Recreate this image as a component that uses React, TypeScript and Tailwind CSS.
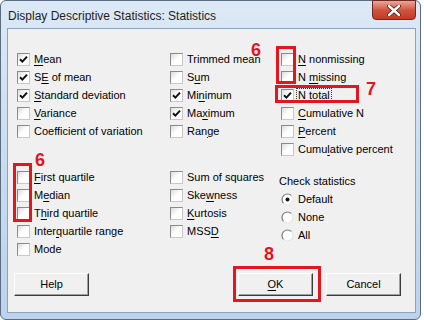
import React from 'react';

type Item = { label: string; key?: number; checked?: boolean; focus?: boolean };

function Label({ label, keyIdx }: { label: string; keyIdx?: number }) {
  if (keyIdx === undefined) return <span>{label}</span>;
  return (
    <span>
      {label.slice(0, keyIdx)}
      <span className="underline underline-offset-[2px]">{label[keyIdx]}</span>
      {label.slice(keyIdx + 1)}
    </span>
  );
}

function Box({ checked }: { checked?: boolean }) {
  return (
    <span className="flex h-[13px] w-[13px] shrink-0 items-center justify-center border border-t-[#8a8a8a] border-l-[#8a8a8a] border-r-[#c8c8c8] border-b-[#c8c8c8] bg-gradient-to-br from-[#dcdcdc] via-white to-white">
      {checked && (
        <svg width="9" height="9" viewBox="0 0 9 9">
          <path d="M1 4.2 L3.4 6.6 L8 1.6" fill="none" stroke="#111" strokeWidth="2" />
        </svg>
      )}
    </span>
  );
}

function Check({ item }: { item: Item }) {
  return (
    <div className="flex h-[18px] items-center gap-[4px]">
      <Box checked={item.checked} />
      <span className={item.focus ? 'outline outline-1 outline-dotted outline-[#333] px-[1px] -ml-[1px] leading-[13px]' : ''}>
        <Label label={item.label} keyIdx={item.key} />
      </span>
    </div>
  );
}

function Radio({ label, on }: { label: string; on?: boolean }) {
  return (
    <div className="flex h-[18px] items-center gap-[4px]">
      <svg width="13" height="13" viewBox="0 0 13 13" className="shrink-0">
        <circle cx="6.5" cy="6.5" r="5.5" fill="#fff" />
        <path d="M2.6 10.4 A5.5 5.5 0 0 1 10.4 2.6" fill="none" stroke="#7a7a7a" strokeWidth="1.2" />
        <path d="M10.4 2.6 A5.5 5.5 0 0 1 2.6 10.4" fill="none" stroke="#e6e6e6" strokeWidth="1.2" />
        {on && <circle cx="6.5" cy="6.5" r="2" fill="#111" />}
      </svg>
      <span>{label}</span>
    </div>
  );
}

function Btn({ children }: { children: React.ReactNode }) {
  return (
    <div className="flex h-[23px] w-[75px] items-center justify-center border border-t-white border-l-white border-r-[#3c3c3c] border-b-[#3c3c3c] bg-[#f0f0f0] shadow-[inset_-1px_-1px_0_#a0a0a0]">
      {children}
    </div>
  );
}

const topCols: Item[][] = [
  [
    { label: 'Mean', key: 0, checked: true },
    { label: 'SE of mean', key: 1, checked: true },
    { label: 'Standard deviation', key: 0, checked: true },
    { label: 'Variance', key: 0 },
    { label: 'Coefficient of variation' },
  ],
  [
    { label: 'Trimmed mean' },
    { label: 'Sum', key: 1 },
    { label: 'Minimum', key: 2, checked: true },
    { label: 'Maximum', key: 2, checked: true },
    { label: 'Range', key: 3 },
  ],
  [
    { label: 'N nonmissing', key: 0 },
    { label: 'N missing', key: 2 },
    { label: 'N total', key: 2, checked: true, focus: true },
    { label: 'Cumulative N', key: 0 },
    { label: 'Percent', key: 0 },
    { label: 'Cumulative percent', key: 4 },
  ],
];

const bottomCols: Item[][] = [
  [
    { label: 'First quartile', key: 0 },
    { label: 'Median', key: 1 },
    { label: 'Third quartile', key: 1 },
    { label: 'Interquartile range', key: 5 },
    { label: 'Mode' },
  ],
  [
    { label: 'Sum of squares' },
    { label: 'Skewness', key: 3 },
    { label: 'Kurtosis', key: 0 },
    { label: 'MSSD', key: 3 },
  ],
];

export default function App() {
  return (
    <div className="relative h-[320px] w-[424px] overflow-hidden bg-white text-[11px] text-black" style={{ fontFamily: '"Liberation Sans", Arial, sans-serif' }}>
      <div className="h-[320px] w-[421px] rounded-[6px] border border-[#5b6b80] bg-gradient-to-b from-[#dce9f6] via-[#c9dcf0] to-[#bcd3ec]">
        {/* title bar */}
        <div className="flex h-[27px] items-start justify-between">
          <span className="pl-[7px] pt-[6px] text-[12px] text-[#1e1e1e]">Display Descriptive Statistics: Statistics</span>
          <div className="mr-[4px] -mt-[1px] flex h-[20px] w-[44px] items-center justify-center rounded-b-[4px] border border-[#6e2a22] bg-gradient-to-b from-[#e9a898] via-[#d0543f] to-[#c33a22]">
            <svg width="14" height="11" viewBox="0 0 14 11">
              <path d="M2 1 L12 10 M12 1 L2 10" stroke="#4a1a14" strokeWidth="4" strokeLinecap="round" />
              <path d="M2 1 L12 10 M12 1 L2 10" stroke="#fff" strokeWidth="2.4" strokeLinecap="round" />
            </svg>
          </div>
        </div>

        {/* client panel */}
        <div className="ml-[6px] h-[285px] w-[409px] border border-[#8ea2b9] bg-[#f0f0f0] pl-[9px] pt-[21px]">
          <div className="grid grid-cols-[153px_111px_1fr]">
            {topCols.map((col, i) => (
              <div key={i} className="flex flex-col">
                {col.map((it) => (
                  <Check key={it.label} item={it} />
                ))}
              </div>
            ))}
          </div>

          <div className="mt-[10px] grid grid-cols-[153px_109px_1fr]">
            {bottomCols.map((col, i) => (
              <div key={i} className="flex flex-col">
                {col.map((it) => (
                  <Check key={it.label} item={it} />
                ))}
              </div>
            ))}
            <div className="flex flex-col pt-[4px]">
              <div className="flex h-[18px] items-center">Check statistics</div>
              <div className="flex flex-col pl-[2px]">
                <Radio label="Default" on />
                <Radio label="None" />
                <Radio label="All" />
              </div>
            </div>
          </div>

          <div className="mt-[15px] flex items-center pr-[14px]">
            <div className="-ml-[3px]">
              <Btn>Help</Btn>
            </div>
            <div className="ml-auto flex gap-[13px]">
              <Btn>
                <Label label="OK" keyIdx={0} />
              </Btn>
              <Btn>Cancel</Btn>
            </div>
          </div>
        </div>
      </div>

      {/* red annotations */}
      <span className="absolute left-[251px] top-[40px] text-[18px] font-bold leading-[20px] text-[#e3151d]">6</span>
      <div className="absolute left-[276px] top-[46px] h-[38px] w-[20px] border-[3px] border-[#e3151d]" />
      <span className="absolute left-[366px] top-[79px] text-[18px] font-bold leading-[20px] text-[#e3151d]">7</span>
      <div className="absolute left-[275px] top-[85px] h-[18px] w-[84px] border-[3px] border-[#e3151d]" />
      <span className="absolute left-[35px] top-[150px] text-[18px] font-bold leading-[20px] text-[#e3151d]">6</span>
      <div className="absolute left-[13px] top-[163px] h-[59px] w-[19px] border-[3px] border-[#e3151d]" />
      <span className="absolute left-[264px] top-[244px] text-[18px] font-bold leading-[20px] text-[#e3151d]">8</span>
      <div className="absolute left-[233px] top-[266px] h-[36px] w-[88px] border-[3px] border-[#e3151d]" />
    </div>
  );
}
